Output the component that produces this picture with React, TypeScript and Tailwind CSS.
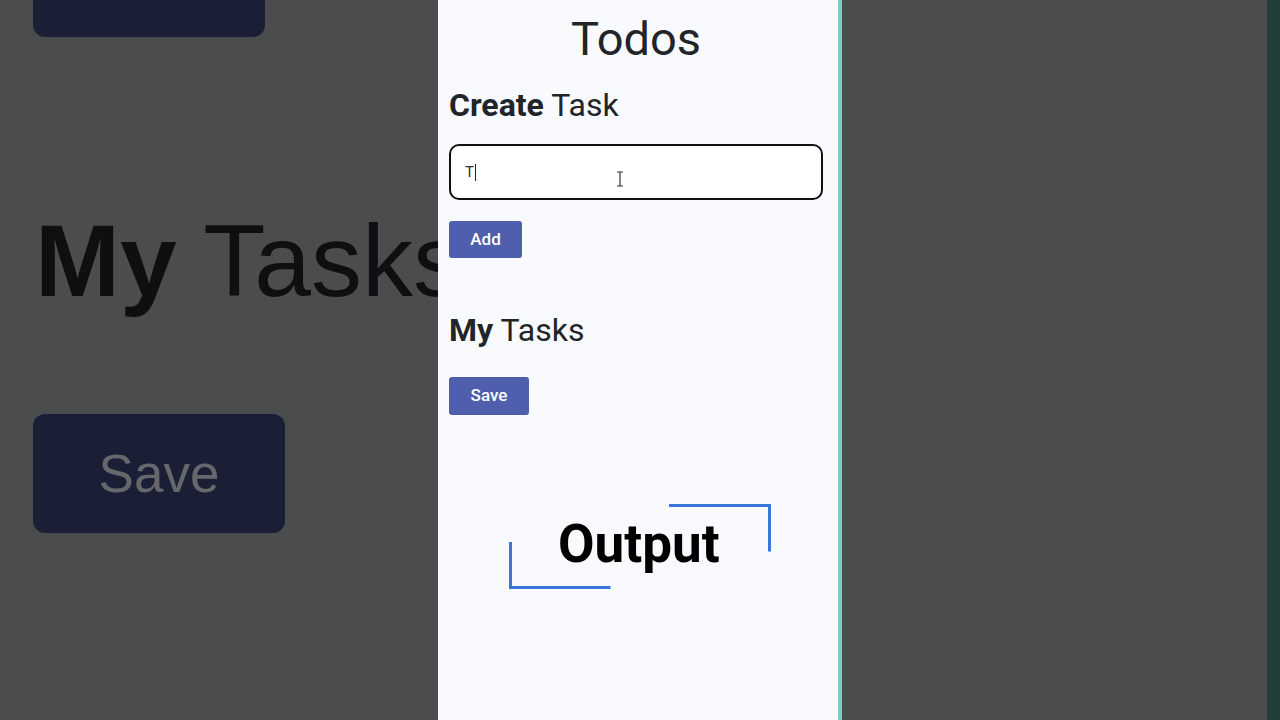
import React from 'react';

const roboto = { fontFamily: 'Roboto, "Noto Sans", sans-serif' };

function BlurredBackdrop() {
  return (
    <div className="relative w-[438px] h-full overflow-hidden bg-[#4b4c4e]" style={{ fontFamily: '"Liberation Sans", Arial, sans-serif' }}>
      <div className="absolute left-[33px] top-[-40px] h-[77px] w-[232px] rounded-[12px] bg-[#1b1f35]" />
      <div className="absolute left-[35px] top-[203px] whitespace-nowrap text-[102px] leading-[116px] text-[#0e0f11] blur-[0.6px]">
        <span className="font-bold">My</span> Tasks
      </div>
      <div className="absolute left-[33px] top-[414px] flex h-[119px] w-[252px] items-center justify-center rounded-[12px] bg-[#1b1f35] text-[53px] text-[#66676c] blur-[0.5px]">
        Save
      </div>
    </div>
  );
}

function Panel() {
  return (
    <div className="relative w-[400px] h-full bg-[#f8fafd] pl-[11px] pr-[15px] text-[#212529]" style={roboto}>
      <h1 className="pt-[10px] text-center text-[47px] leading-[57px] font-normal">Todos</h1>
      <h2 className="mt-[19px] text-[32px] leading-[38px]">
        <span className="font-bold">Create</span> Task
      </h2>
      <div className="mt-[20px] flex h-[56px] w-[374px] items-center rounded-[10px] border-2 border-[#111] bg-white pl-[14px]">
        <span className="text-[15px] text-[#333]">T</span>
        <span className="ml-[1px] h-[17px] w-[1px] bg-[#222]" />
      </div>
      <button className="mt-[21px] flex h-[37px] w-[73px] items-center justify-center rounded-[3px] bg-[#4f5fae] text-[17px] font-medium text-white">
        Add
      </button>
      <h2 className="mt-[53px] text-[32px] leading-[38px]">
        <span className="font-bold">My</span> Tasks
      </h2>
      <button className="mt-[28px] flex h-[38px] w-[80px] items-center justify-center rounded-[3px] bg-[#4f5fae] text-[17px] font-medium text-white">
        Save
      </button>

      {/* text cursor */}
      <svg className="absolute left-[178px] top-[171px]" width="8" height="16" viewBox="0 0 8 16">
        <path d="M1 1h6M4 1v14M1 15h6" stroke="#333" strokeWidth="1.2" fill="none" />
      </svg>

      {/* caption overlay */}
      <svg className="absolute left-[70px] top-[503px]" width="264" height="88" viewBox="0 0 264 88">
        <path d="M161 2.5h100.5v46" stroke="#3a76d8" strokeWidth="3" fill="none" />
        <path d="M2.5 39v45.5h100" stroke="#3a76d8" strokeWidth="3" fill="none" />
      </svg>
      <div className="absolute left-[120px] top-[512px] text-[53px] leading-[64px] font-bold text-black">Output</div>
    </div>
  );
}

export default function App() {
  return (
    <div className="flex h-[720px] w-[1280px] overflow-hidden bg-[#4b4c4e]">
      <BlurredBackdrop />
      <Panel />
      <div className="w-[4px] h-full bg-[#7ecdc0]" />
      <div className="w-[425px] h-full bg-[#4b4c4e]" />
      <div className="flex-1 h-full bg-[#213e39]" />
    </div>
  );
}
